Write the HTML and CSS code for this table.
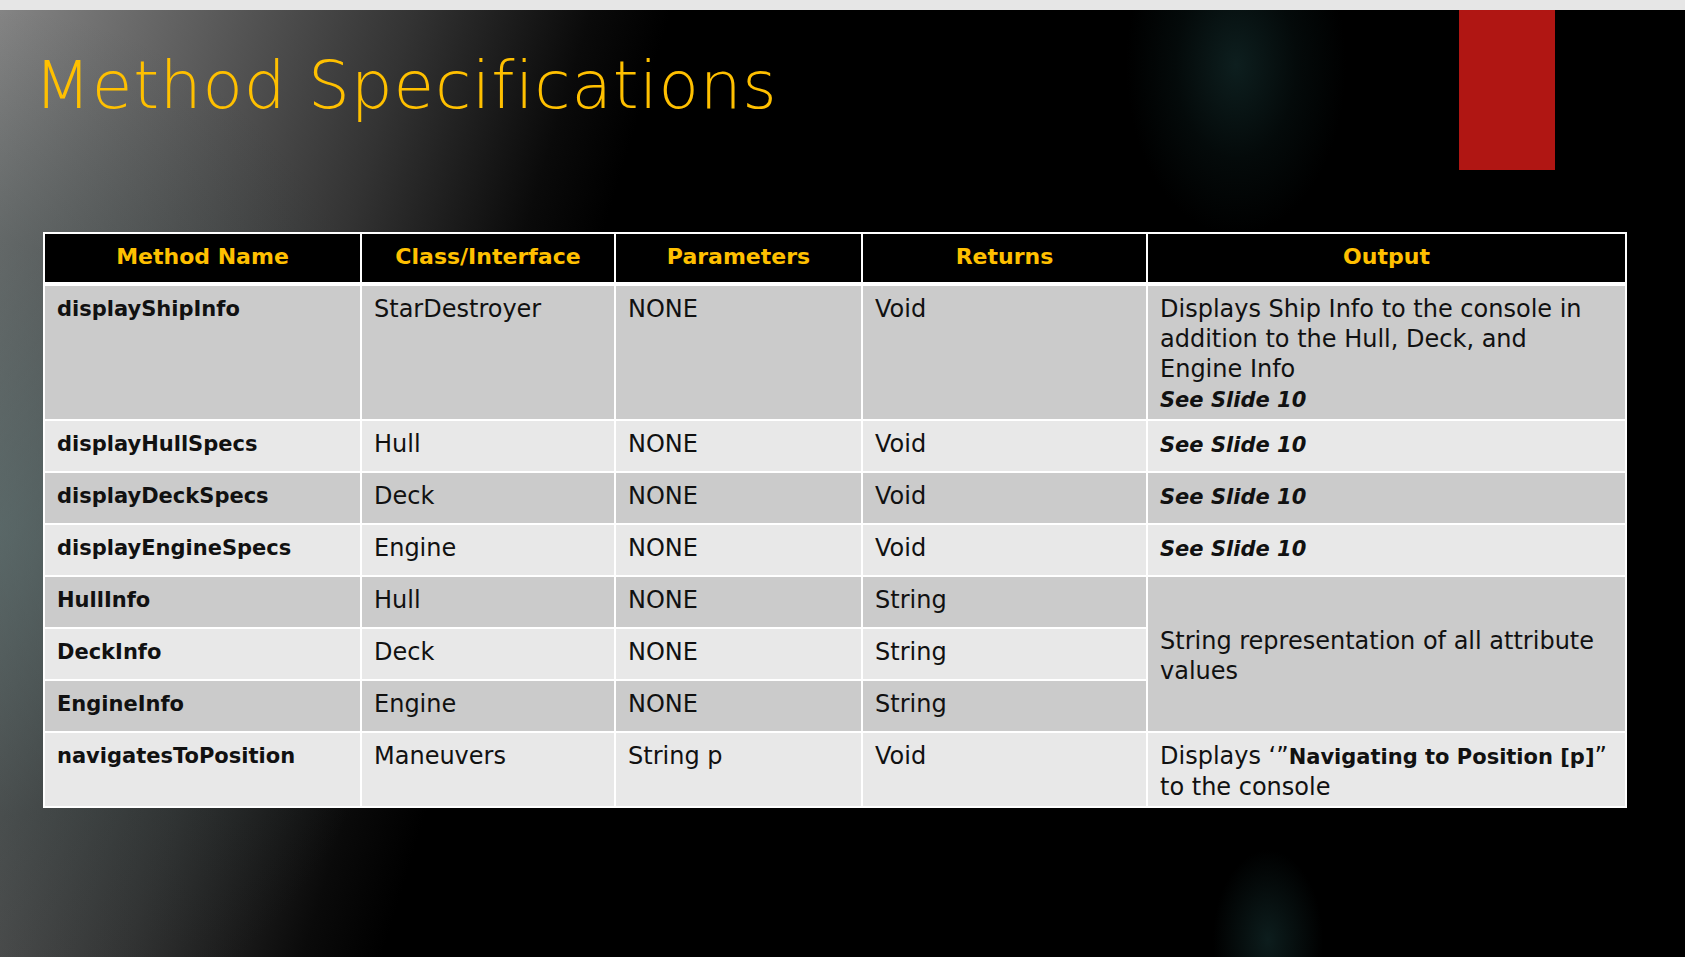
FILE: index.html
```html
<!DOCTYPE html>
<html lang="en">
<head>
<meta charset="utf-8">
<title>Method Specifications</title>
<link rel="stylesheet" href="styles.css">
</head>
<body>
<div class="topbar"></div>
<main class="slide">
  <header class="slide-head">
    <h1 class="title">Method Specifications</h1>
    <div class="accent"></div>
  </header>
  <table class="spec">
    <colgroup>
      <col class="c1"><col class="c2"><col class="c3"><col class="c4"><col class="c5">
    </colgroup>
    <thead>
      <tr>
        <th>Method Name</th>
        <th>Class/Interface</th>
        <th>Parameters</th>
        <th>Returns</th>
        <th>Output</th>
      </tr>
    </thead>
    <tbody>
      <tr class="dark">
        <td class="name">displayShipInfo</td>
        <td>StarDestroyer</td>
        <td>NONE</td>
        <td>Void</td>
        <td>Displays Ship Info to the console in addition to the Hull, Deck, and Engine Info<br><b class="ref">See Slide 10</b></td>
      </tr>
      <tr class="light">
        <td class="name">displayHullSpecs</td>
        <td>Hull</td>
        <td>NONE</td>
        <td>Void</td>
        <td><b class="ref">See Slide 10</b></td>
      </tr>
      <tr class="dark">
        <td class="name">displayDeckSpecs</td>
        <td>Deck</td>
        <td>NONE</td>
        <td>Void</td>
        <td><b class="ref">See Slide 10</b></td>
      </tr>
      <tr class="light">
        <td class="name">displayEngineSpecs</td>
        <td>Engine</td>
        <td>NONE</td>
        <td>Void</td>
        <td><b class="ref">See Slide 10</b></td>
      </tr>
      <tr class="dark">
        <td class="name">HullInfo</td>
        <td>Hull</td>
        <td>NONE</td>
        <td>String</td>
        <td class="merged" rowspan="3">String representation of all attribute values</td>
      </tr>
      <tr class="light">
        <td class="name">DeckInfo</td>
        <td>Deck</td>
        <td>NONE</td>
        <td>String</td>
      </tr>
      <tr class="dark">
        <td class="name">EngineInfo</td>
        <td>Engine</td>
        <td>NONE</td>
        <td>String</td>
      </tr>
      <tr class="light last">
        <td class="name">navigatesToPosition</td>
        <td>Maneuvers</td>
        <td>String p</td>
        <td>Void</td>
        <td>Displays &lsquo;&rdquo;<b class="em">Navigating to Position [p]</b>&rdquo; to the console</td>
      </tr>
    </tbody>
  </table>
</main>
</body>
</html>
```

FILE: styles.css
```css
html, body {
  margin: 0;
  padding: 0;
}
body {
  width: 1685px;
  height: 957px;
  overflow: hidden;
  background: #000;
  font-family: "DejaVu Sans", "Liberation Sans", sans-serif;
}
.topbar {
  height: 10px;
  background: #e6e6e6;
}
.slide {
  height: 947px;
  box-sizing: border-box;
  background:
    radial-gradient(ellipse 110px 170px at 1236px 55px, rgba(14, 32, 32, 0.95), rgba(8, 20, 20, 0.5) 55%, rgba(0, 0, 0, 0) 100%),
    radial-gradient(ellipse 55px 90px at 1268px 930px, rgba(14, 32, 32, 0.9), rgba(0, 0, 0, 0) 100%),
    radial-gradient(ellipse 420px 520px at 0px 520px, rgba(80, 105, 105, 0.55), rgba(40, 60, 60, 0.25) 55%, rgba(0, 0, 0, 0) 100%),
    linear-gradient(107deg, #848484 0%, #5e5e5e 10%, #333 21%, #0a0a0a 30%, #000 34%);
}
.slide-head {
  display: flex;
  align-items: flex-start;
  height: 160px;
}
.title {
  margin: 36px 0 0 34px;
  font-family: "DejaVu Sans", sans-serif;
  font-weight: 200;
  font-size: 66px;
  line-height: 80px;
  color: #ffc000;
  letter-spacing: 0.8px;
  white-space: nowrap;
}
.accent {
  margin-left: auto;
  margin-right: 130px;
  width: 96px;
  height: 160px;
  background: #b01613;
}
.spec {
  margin: 62px 0 0 43px;
  width: 1582px;
  border-collapse: collapse;
  table-layout: fixed;
  font-size: 24px;
  color: #111;
}
.c1 { width: 317px; }
.c2 { width: 254px; }
.c3 { width: 247px; }
.c4 { width: 285px; }
.c5 { width: 479px; }
.spec th {
  background: #000;
  color: #ffc000;
  font-weight: bold;
  font-size: 22px;
  height: 45px;
  padding: 0 0 3px 0;
  border: 2px solid #fff;
  border-bottom: 4px solid #fff;
  text-align: center;
  vertical-align: middle;
}
.spec td {
  border: 2px solid #fff;
  padding: 8px 14px 4px 12px;
  line-height: 30px;
  height: 38px;
  vertical-align: top;
  text-align: left;
}
.spec .dark td { background: #cbcbcb; }
.spec .light td { background: #e8e8e8; }
.spec td.merged {
  background: #cbcbcb;
  vertical-align: middle;
  padding-top: 8px;
}
.spec td.name {
  font-weight: bold;
  font-size: 21px;
}
.ref {
  font-weight: bold;
  font-style: italic;
  font-size: 21px;
}
.em {
  font-weight: bold;
  font-size: 21px;
}
```
